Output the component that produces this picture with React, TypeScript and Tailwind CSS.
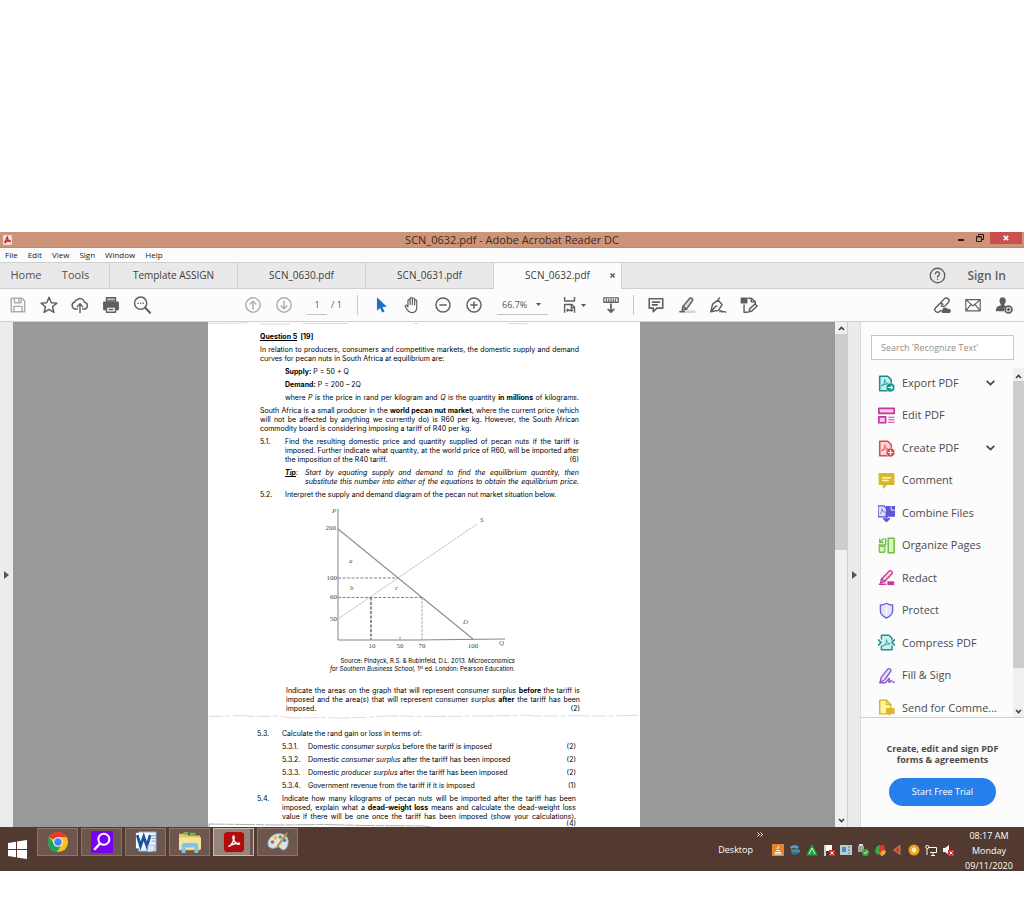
import type { ReactNode } from "react";

type SvgProps = { size?: number; children: ReactNode };

/* Line icon on a 20 unit grid */
function Icon({ size = 18, children }: SvgProps) {
  return (
    <svg
      width={size}
      height={size}
      viewBox="0 0 20 20"
      fill="none"
      stroke="currentColor"
      strokeWidth="1.6"
      strokeLinejoin="round"
      strokeLinecap="round"
      aria-hidden="true"
      className="shrink-0"
    >
      {children}
    </svg>
  );
}

function ToolButton({ label, light, children }: { label: string; light?: boolean; children: ReactNode }) {
  return (
    <button
      type="button"
      aria-label={label}
      className={
        light
          ? "flex w-[31px] shrink-0 items-center justify-center text-[#adadad]"
          : "flex w-[31px] shrink-0 items-center justify-center text-[#5f5f5f]"
      }
    >
      <Icon>{children}</Icon>
    </button>
  );
}

function Divider() {
  return <span className="h-5 w-px shrink-0 bg-[#c8c8c8]" />;
}

function Arrow({ up }: { up?: boolean }) {
  return (
    <svg width="7" height="5" viewBox="0 0 7 5" fill="none" stroke="#404040" strokeWidth="1.6" aria-hidden="true">
      <path d={up ? "M1 4 3.5 1.5 6 4" : "M1 1 3.5 3.5 6 1"} />
    </svg>
  );
}

function TitleBar() {
  return (
    <header className="flex h-4 shrink-0 items-start border-b border-[#b98a76] bg-[#cd9479]">
      <div className="flex h-full w-[90px] items-center pl-[3px]">
        <svg width="9" height="10" viewBox="0 0 9 10" aria-hidden="true">
          <rect width="9" height="10" rx="1" fill="#f3dcd8" />
          <path d="M1.5 8 4.3 2l.6 2.8L8 6.5 4 6z" fill="none" stroke="#c4252b" strokeWidth="1.2" />
        </svg>
      </div>
      <h1 className="flex-1 text-center text-[11px] leading-[15px] text-[#3d2a22]">
        SCN_0632.pdf - Adobe Acrobat Reader DC
      </h1>
      <div className="flex w-[90px] justify-end pr-[2px] text-[#2b1c16]">
        <button type="button" aria-label="Minimize" className="flex h-3 w-[18px] items-end justify-center pb-[3px]">
          <span className="h-[2px] w-[6px] bg-[#2b1c16]" />
        </button>
        <button type="button" aria-label="Restore" className="flex h-3 w-[20px] items-center justify-center">
          <svg width="8" height="8" viewBox="0 0 8 8" fill="none" stroke="#2b1c16" aria-hidden="true">
            <path d="M.5 2.5h5v5h-5zM.5 3h5M2.5 2V.5h5v5H6" />
          </svg>
        </button>
        <button type="button" aria-label="Close" className="flex h-3 w-8 items-center justify-center bg-[#c9504f]">
          <svg width="6" height="6" viewBox="0 0 6 6" stroke="#fff" strokeWidth="1.5" aria-hidden="true">
            <path d="m.7.7 4.6 4.6M5.3.7.7 5.3" />
          </svg>
        </button>
      </div>
    </header>
  );
}

function MenuBar() {
  return (
    <nav className="flex h-[14px] shrink-0 items-center gap-[10px] bg-[#fcfcfc] pl-[5px] text-[8px] text-[#222]">
      {["File", "Edit", "View", "Sign", "Window", "Help"].map((m) => (
        <button key={m} type="button">
          {m}
        </button>
      ))}
    </nav>
  );
}

const files = ["Template ASSIGN", "SCN_0630.pdf", "SCN_0631.pdf"];

function TabBar() {
  return (
    <nav className="flex h-[27px] shrink-0 border-y border-[#cfcfcf] bg-[#e9e9e9] text-[10px] text-[#3c3c3c]">
      <button type="button" className="w-[52px] text-[11px] text-[#505050]">Home</button>
      <button type="button" className="mr-[10px] w-[47px] text-[11px] text-[#505050]">Tools</button>
      {files.map((f) => (
        <button key={f} type="button" className="w-32 border-l border-[#d2d2d2]">
          {f}
        </button>
      ))}
      <div className="-mb-px flex w-[129px] items-center border-x border-[#d2d2d2] bg-[#fcfcfc] pb-[2px]">
        <button type="button" className="flex-1 pl-[18px]">SCN_0632.pdf</button>
        <button type="button" aria-label="Close tab" className="flex w-[18px] justify-center">
          <svg width="5" height="5" viewBox="0 0 5 5" stroke="#555" strokeWidth="1.3" aria-hidden="true">
            <path d="m.5.5 4 4M4.5.5l-4 4" />
          </svg>
        </button>
      </div>
      <div className="ml-auto flex items-center pr-[18px] text-[#5f5f5f]">
        <button type="button" aria-label="Help" className="mr-[21px]">
          <Icon size={17}>
            <circle cx="10" cy="10" r="8.5" />
            <path d="M7.6 8a2.4 2.4 0 1 1 3.6 2.1c-.9.5-1.2.9-1.2 1.8M10 14.2v.2" />
          </Icon>
        </button>
        <button type="button" className="text-[12px] font-semibold">Sign In</button>
      </div>
    </nav>
  );
}

function Toolbar() {
  return (
    <div className="flex h-[33px] shrink-0 items-center border-b border-[#cfcfcf] bg-[#fcfcfc] pl-[2px] text-[9px] text-[#555]">
      <ToolButton label="Save" light>
        <path d="M2.5 2.5h12l3 3v12h-15zM6 2.5v5h7.5v-5M11 4v2M5.5 17.5v-6h9v6" />
      </ToolButton>
      <ToolButton label="Star">
        <path d="m10 1.5 2.5 6 6.3.4-4.9 4.1 1.6 6.3L10 14.9l-5.5 3.4L6.1 12 1.2 7.9l6.3-.4z" />
      </ToolButton>
      <ToolButton label="Upload">
        <path d="M7 14.5H5a4 4 0 0 1-.6-7.9A3 3 0 0 1 7 4.2 4.8 4.8 0 0 1 15 7a3.8 3.8 0 0 1 .2 7.5H13M10 18.5V9M7 11.8 10 8.6l3 3.2" />
      </ToolButton>
      <ToolButton label="Print">
        <path d="M5 2h10v3.5H5z" fill="currentColor" fillOpacity=".35" />
        <path d="M2 7h16v8h-2.5v-3h-11v3H2z" fill="currentColor" />
        <path d="M5 12h10v6H5zM8 15h4" />
      </ToolButton>
      <ToolButton label="Find">
        <circle cx="8.500" cy="8" r="6.800" />
        <path d="M5.600 8h.2M8.500 8h.1M11.300 8h.2" />
        <path d="m13.500 13 5.500 5.500" strokeWidth="2.4" />
      </ToolButton>

      <div className="ml-20 flex items-center">
        <ToolButton label="Previous page" light>
          <circle cx="10" cy="10" r="8" />
          <path d="M10 14.5V6M6.8 9 10 5.8 13.200 9" />
        </ToolButton>
        <ToolButton label="Next page" light>
          <circle cx="10" cy="10" r="8" />
          <path d="M10 5.500V14M6.800 11 10 14.200 13.200 11" />
        </ToolButton>
        <input
          aria-label="Page number"
          defaultValue="1"
          className="ml-2 h-[19px] w-5 border-b border-[#c4c4c4] bg-transparent text-center outline-none"
        />
        <span className="ml-1 w-3 whitespace-nowrap">/ 1</span>
      </div>

      <div className="ml-[14px] flex items-center">
        <Divider />
        <span className="w-[7px]" />
        <ToolButton label="Select">
          <path d="M5.500 1.500v15l3.500-3.200 2.300 5 2.600-1.100-2.300-4.900 4.900-.4z" fill="#1f6fc0" stroke="none" />
        </ToolButton>
        <ToolButton label="Pan">
          <path d="M5.500 12V5a1.200 1.200 0 0 1 2.400 0v4.500V3a1.200 1.200 0 0 1 2.500 0v6.500V3.500a1.200 1.200 0 0 1 2.500 0V10 5.500a1.200 1.200 0 0 1 2.400 0V12c0 4-2 6.500-5.300 6.500-3.500 0-5-1.800-7.500-6.800-.5-1.300 1-2 1.900-1z" strokeWidth="1.300" />
        </ToolButton>
        <ToolButton label="Zoom out">
          <circle cx="10" cy="10" r="7.800" />
          <path d="M6.500 10h7" />
        </ToolButton>
        <ToolButton label="Zoom in">
          <circle cx="10" cy="10" r="7.800" />
          <path d="M6.500 10h7M10 6.500v7" />
        </ToolButton>
        <label className="ml-2 flex h-[19px] w-[51px] items-center border-b border-[#c4c4c4] pl-[5px]">
          <select aria-label="Zoom level" className="w-[29px] appearance-none bg-transparent text-[9px] outline-none">
            <option>66.7%</option>
          </select>
          <svg width="5" height="3" viewBox="0 0 5 3" className="ml-[5px]" aria-hidden="true">
            <path d="M0 0h5L2.500 3z" fill="#555" />
          </svg>
        </label>
        <button type="button" aria-label="Fit page" className="ml-[13px] flex w-[26px] items-center text-[#5f5f5f]">
          <Icon>
            <path d="M4 1v4.500h11V1M4 18.500V9.500h8l3 3v6M11.500 9.500v3.500H15M6.500 15.800h6M8 14.300l-1.500 1.500L8 17.300M11 14.300l1.500 1.500-1.500 1.500" strokeLinecap="butt" />
          </Icon>
          <svg width="5" height="3" viewBox="0 0 5 3" className="ml-[2px]" aria-hidden="true">
            <path d="M0 0h5L2.500 3z" fill="#555" />
          </svg>
        </button>
        <span className="w-2" />
        <ToolButton label="Scroll mode">
          <path d="M2 2h16v5H2zM5 4v2M7.500 4v2M10 4v2M12.500 4v2M15 4v2" strokeWidth="1.400" />
          <path d="M10 9v8.500M6.800 14.800 10 18l3.200-3.200" strokeWidth="1.900" />
        </ToolButton>
        <span className="w-[7px]" />
        <Divider />
        <span className="w-[6px]" />
        <ToolButton label="Comment">
          <path d="M2.500 3h15v10.500H11L7 17.500v-4H2.500zM6 6.800h8M6 9.800h5.500" strokeWidth="1.800" />
        </ToolButton>
        <ToolButton label="Highlight">
          <path d="M8 17.500h10" stroke="#d4d4d4" strokeWidth="3" />
          <path d="M5.500 11.500 13 2.500q2.500-.8 3.500 2L9.500 14.500 4.500 16z" fill="#d9d9d9" />
          <path d="m5.500 11.500 4 3M2 17.500h5" />
        </ToolButton>
        <ToolButton label="Sign">
          <path d="M2 17.500 4 9l6-4.500 4.500 5L10.500 16zM2 17.500l5.500-6.200M10 4.500 11.500 2M8.500 11.200v.1M12 17.500c1.500-3 2 1 3 0s1.500.5 3.500.2" />
        </ToolButton>
        <ToolButton label="Fill and edit">
          <path d="M1.500 2.500h6v5h-6z" fill="currentColor" />
          <path d="M9 2.500h3.500l4.500 4V9M12.500 2.500v4H17M4.500 10v8h4M10 17.500l.8-3.200 5.700-5.500 2.500 2.400-5.800 5.500z" />
        </ToolButton>
      </div>

      <div className="ml-auto flex items-center pr-[5px]">
        <ToolButton label="Copy link">
          <path d="m8.500 7.500 4-4.300a3 3 0 0 1 4.500 4l-3.300 3.500a3 3 0 0 1-4.300 0M11 9.300a3 3 0 0 0-4.300 0L3 13a3 3 0 0 0 4.300 4.200l1.200-1.200" />
          <path d="M10.500 19a2.300 2.300 0 0 1 0-4 3.100 3.100 0 0 1 5.800-.5 2.300 2.300 0 0 1 2 4.500z" fill="currentColor" stroke="none" />
        </ToolButton>
        <ToolButton label="Email">
          <path d="M2 4h16v12.500H2zM2 4l8 7 8-7M2 16.500l5.800-7.200M18 16.500l-5.800-7.200" strokeWidth="1.300" />
        </ToolButton>
        <ToolButton label="Share">
          <path d="M8.500 1.500c2.400 0 3.500 1.700 3.500 3.800 0 1.800-.7 2.900-1.500 3.800v1.400c2 .6 3.500 1 4 2.500H10V17H1c0-4 .5-5.500 5.500-6.500V9.100C5.700 8.200 5 7 5 5.300c0-2.100 1.100-3.800 3.500-3.800z" fill="currentColor" stroke="none" />
          <circle cx="15" cy="15" r="3.800" fill="#fcfcfc" strokeWidth="2" />
          <path d="M13.500 15h3M15 13.500v3" />
        </ToolButton>
      </div>
    </div>
  );
}

/* A paragraph whose lines all reach the right edge except the last */
function Lines({ rows, full }: { rows: ReactNode[]; full?: boolean }) {
  return (
    <>
      {rows.map((r, i) => (
        <span
          key={i}
          className={
            full || i < rows.length - 1
              ? "block [text-align-last:justify]"
              : "flex justify-between"
          }
        >
          {r}
        </span>
      ))}
    </>
  );
}

function Item({ n, children }: { n: string; children: ReactNode }) {
  return (
    <div className="grid grid-cols-[25px_1fr]">
      <span>{n}</span>
      <div>{children}</div>
    </div>
  );
}

function Diagram() {
  return (
    <svg viewBox="0 0 320 158" className="h-[158px] w-full" role="img" aria-label="Supply and demand diagram">
      <g fill="none" stroke="#777">
        <path d="M79 10v131h77l90-1" strokeWidth=".9" />
        <path d="m79 30 135 110" strokeWidth="1.100" stroke="#8c8c8c" />
        <path d="M79 120 218 25" strokeWidth=".8" stroke="#b0b0b0" strokeDasharray="3 .6" />
        <path d="M79 79h60M79 98.500h84" strokeDasharray="3 1.500" strokeWidth=".9" />
        <path d="M112 98.500v42" strokeDasharray="3 1.500" strokeWidth="1.200" stroke="#444" />
        <path d="M163 98v42" strokeDasharray="3 1" strokeWidth=".7" stroke="#888" />
        <path d="M141 138v2.500" strokeWidth=".8" />
      </g>
      <g fill="#444" fontSize="7" fontFamily="Liberation Serif, serif">
        <g textAnchor="end">
          <text x="77" y="31">200</text>
          <text x="78" y="81">100</text>
          <text x="78" y="100">60</text>
          <text x="78" y="122">50</text>
        </g>
        <g textAnchor="middle">
          <text x="113" y="149">10</text>
          <text x="141" y="149">50</text>
          <text x="163" y="149">70</text>
          <text x="214" y="149">100</text>
        </g>
        <g fontStyle="italic" fill="#555">
          <text x="73" y="14">P</text>
          <text x="221" y="23">S</text>
          <text x="90" y="64">a</text>
          <text x="91" y="91">b</text>
          <text x="136" y="91">c</text>
          <text x="204" y="125">D</text>
          <text x="240" y="146">Q</text>
        </g>
      </g>
    </svg>
  );
}

const losses: [string, ReactNode, string][] = [
  ["5.3.1.", <>Domestic <i>consumer surplus</i> before the tariff is imposed</>, "(2)"],
  ["5.3.2.", <>Domestic <i>consumer surplus</i> after the tariff has been imposed</>, "(2)"],
  ["5.3.3.", <>Domestic <i>producer surplus</i> after the tariff has been imposed</>, "(2)"],
  ["5.3.4.", <>Government revenue from the tariff if it is imposed</>, "(1)"],
];

function ScannedPage() {
  return (
    <article className="w-[432px] shrink-0 self-start bg-white font-[Inter,'Liberation_Sans',sans-serif] text-[7px] leading-[9px] text-black">
      <svg viewBox="0 0 432 10" className="h-[10px] w-full" aria-hidden="true" fill="none" stroke="#c9c9c9" strokeWidth=".7">
        <path d="M0 1.500 40 .8M52 2h30M95 1.500h45M205 1.500h5M300 1.500l20 .5" />
      </svg>
      <div className="flex flex-col gap-1 pl-[52px] pr-[61px]">
        <h2 className="font-bold"><u>Question 5</u>&nbsp; [19]</h2>
        <p>
          <Lines
            rows={[
              "In relation to producers, consumers and competitive markets, the domestic supply and demand",
              "curves for pecan nuts in South Africa at equilibrium are:",
            ]}
          />
        </p>
        <p className="pl-[25px]"><b>Supply:</b> P = 50 + Q</p>
        <p className="pl-[25px]"><b>Demand:</b> P = 200 – 2Q</p>
        <p className="pl-[25px]">
          <Lines
            full
            rows={[
              <>where <i>P</i> is the price in rand per kilogram and <i>Q</i> is the quantity <b>in millions</b> of kilograms.</>,
            ]}
          />
        </p>
        <p>
          <Lines
            rows={[
              <>South Africa is a small producer in the <b>world pecan nut market</b>, where the current price (which</>,
              "will not be affected by anything we currently do) is R60 per kg. However, the South African",
              "commodity board is considering imposing a tariff of R40 per kg.",
            ]}
          />
        </p>
        <Item n="5.1.">
          <Lines
            rows={[
              "Find the resulting domestic price and quantity supplied of pecan nuts if the tariff is",
              "imposed. Further indicate what quantity, at the world price of R60, will be imported after",
              <><span>the imposition of the R40 tariff.</span><span>(6)</span></>,
            ]}
          />
        </Item>
        <div className="grid grid-cols-[20px_1fr] pl-[25px] italic">
          <span><b><u>Tip</u></b>:</span>
          <div>
            <Lines
              full
              rows={[
                "Start by equating supply and demand to find the equilibrium quantity, then",
                "substitute this number into either of the equations to obtain the equilibrium price.",
              ]}
            />
          </div>
        </div>
        <Item n="5.2.">Interpret the supply and demand diagram of the pecan nut market situation below.</Item>
      </div>
      <figure className="pl-[51px] pr-[61px]">
        <Diagram />
        <figcaption className="pr-[64px] text-right text-[6px] leading-[8px]">
          Source: Pindyck, R.S. &amp; Rubinfeld, D.L. 2013. <i>Microeconomics</i>
          <br />
          <i>for Southern Business School,</i> 1<sup className="text-[4px] leading-[0]">st</sup> ed. London: Pearson Education.
        </figcaption>
      </figure>
      <p className="mt-[13px] pl-[78px] pr-[60px]">
        <Lines
          rows={[
            <>Indicate the areas on the graph that will represent consumer surplus <b>before</b> the tariff is</>,
            <>imposed and the area(s) that will represent consumer surplus <b>after</b> the tariff has been</>,
            <><span>imposed.</span><span>(2)</span></>,
          ]}
        />
      </p>
      <svg viewBox="0 0 432 16" className="h-4 w-full" aria-hidden="true" fill="none" stroke="#d4d4d4" strokeWidth=".8">
        <path d="M1 3.500 35 2.500l10 1 25-.5 15 2 30-.5 20 .5 30-1 12-1 60 .5 62-.8 20-.5 10 1 40-.5 25 .5 36-1" strokeDasharray="14 2 5 3 22 2" />
      </svg>
      <div className="flex flex-col gap-1 pl-[49px] pr-[64px]">
        <Item n="5.3.">Calculate the rand gain or loss in terms of:</Item>
        {losses.map(([n, text, marks]) => (
          <div key={n} className="flex pl-[25px]">
            <span className="w-[26px]">{n}</span>
            <span className="flex-1">{text}</span>
            <span>{marks}</span>
          </div>
        ))}
        <Item n="5.4.">
          <Lines
            full
            rows={[
              "Indicate how many kilograms of pecan nuts will be imported after the tariff has been",
              <>imposed, explain what a <b>dead-weight loss</b> means and calculate the dead-weight loss</>,
              "value if there will be one once the tariff has been imposed (show your calculations).",
            ]}
          />
        </Item>
      </div>
      <div className="-mt-[2px] flex items-end pr-[64px] leading-[9px]">
        <svg viewBox="0 0 230 6" className="h-[6px] w-[230px]" aria-hidden="true" fill="none" stroke="#999" strokeWidth=".8">
          <path d="M1 6V2l70 1 45-.5 40 1 60 .5 14 2" strokeDasharray="20 1 8 1" />
        </svg>
        <span className="ml-auto">(4)</span>
      </div>
    </article>
  );
}

function RailToggle({ label }: { label: string }) {
  return (
    <button type="button" aria-label={label} className="flex h-full w-full items-center justify-center">
      <svg width="5" height="8" viewBox="0 0 5 8" aria-hidden="true">
        <path d="M0 0v8l5-4z" fill="#555" />
      </svg>
    </button>
  );
}

function DocShape({ stroke, fill }: { stroke: string; fill: string }) {
  return (
    <>
      <path d="M2 1.500h9.500l4 4v13H2z" fill={fill} stroke={stroke} strokeWidth="1.800" />
      <path d="M4.500 12.500c2-1 3.800-4 3.500-7 .2 3 2 5 4.500 5.200-2.500-.3-5.500.3-8 1.800z" stroke={stroke} strokeWidth="1" />
    </>
  );
}

const tools: { name: string; more?: boolean; art: ReactNode }[] = [
  {
    name: "Export PDF",
    more: true,
    art: (
      <>
        <DocShape stroke="#169087" fill="#bdeef0" />
        <circle cx="14.700" cy="14.700" r="5.200" fill="#169087" stroke="#fcfcfc" strokeWidth=".6" />
        <path d="M12 14.700h4.800M15.200 12.900 17 14.700l-1.800 1.800" stroke="#fff" strokeWidth="1.300" />
      </>
    ),
  },
  {
    name: "Edit PDF",
    art: (
      <g stroke="#c8379b">
        <path d="M1 1.500h18v6H1zM1 11.500h8v7H1z" fill="#fbcdec" strokeWidth="2" />
        <path d="M12.500 12H19M12.500 15H19M12.500 18H19" strokeWidth="1.200" />
      </g>
    ),
  },
  {
    name: "Create PDF",
    more: true,
    art: (
      <>
        <DocShape stroke="#dd4850" fill="#fcd5d5" />
        <circle cx="14.700" cy="14.700" r="5.200" fill="#dd4850" stroke="#fcfcfc" strokeWidth=".6" />
        <path d="M12.200 14.700h5M14.700 12.200v5" stroke="#fff" strokeWidth="1.300" />
      </>
    ),
  },
  {
    name: "Comment",
    art: (
      <>
        <path d="M1.500 2h17v12.500H10.500L6.500 18.500v-4h-5z" fill="#d8b92b" stroke="#d8b92b" />
        <path d="M5.500 6.800h9.500M5.500 10h6.500" stroke="#fff6c4" />
      </>
    ),
  },
  {
    name: "Combine Files",
    art: (
      <g stroke="#5b57d6">
        <path d="M10 2h9.500v11H10z" fill="#5b57d6" />
        <path d="M15.500 2v4h4" stroke="#fff" strokeWidth="1" />
        <path d="M0 1h7l3 3v10H0z" fill="#dfe0ff" />
        <path d="M2.500 10.500C5 8 5 6 4.800 4.500 5 7 6 8 8 8.500" strokeWidth="1" />
        <path d="M10 10v9M7 16l3 3.200L13 16" strokeWidth="2.200" />
      </g>
    ),
  },
  {
    name: "Organize Pages",
    art: (
      <g stroke="#77bd45">
        <path d="M12 1.500h7v17h-7z" fill="#d9f4c4" strokeWidth="1.800" />
        <path d="M1.500 11H8v7H1.500z" fill="#d9f4c4" strokeDasharray="2 1.500" />
        <path d="M9 9V2M6.500 2 2 6.500M2 2.500v4h4M1 9.500h8" strokeWidth="1.700" />
      </g>
    ),
  },
  {
    name: "Redact",
    art: (
      <g stroke="#c8379b">
        <path d="m4 12 9-9.500c2-1.500 5 .8 3.500 3L8 14.500l-5 2z" fill="#fbcdec" />
        <path d="m4 12 4 2.500M1.500 18H9" />
        <path d="M11 14.500h8V19h-8z" fill="#c8379b" stroke="none" />
      </g>
    ),
  },
  {
    name: "Protect",
    art: (
      <>
        <path d="M10 1.500c2 1.500 4.500 2 7.200 2V10c0 4.500-3 7-7.200 8.800C5.800 17 2.800 14.500 2.800 10V3.500c2.700 0 5.200-.5 7.200-2z" fill="#e6e5ff" stroke="#6d68cf" strokeWidth="1.700" />
        <path d="M10 3v14" stroke="#fff" strokeWidth="1" />
      </>
    ),
  },
  {
    name: "Compress PDF",
    art: (
      <g stroke="#22918f">
        <path d="M4 1.500h9l3.500 3.500v13.500H4z" fill="#c9f1f1" stroke="none" />
        <path d="M4 6V1.500h9l3.500 3.500v2M4 14v4.500h12.500V14" strokeWidth="1.700" />
        <path d="M6 14c2.500-1 4.300-4.500 4-7.500.3 3 2 5 4.500 5.200C12 11.500 8.500 12.500 6 14z" strokeWidth="1" />
        <path d="M.8 7 3.500 10 .8 13M19.200 7l-2.700 3 2.700 3" strokeWidth="2" />
      </g>
    ),
  },
  {
    name: "Fill & Sign",
    art: (
      <g stroke="#8b5cc9">
        <path d="m3.500 12.500 8-10c2-1.500 4.500.5 3.500 2.500L8 15l-5.500 3z" fill="#eadcff" />
        <path d="M2 18.500h6c3-.5 4-5.500 5.200-5 1.300.6-1.500 4-.2 4.500 1.200.5 1.600-2 2.600-1.800.9.3 0 2 3.900 1.800" />
      </g>
    ),
  },
  {
    name: "Send for Comme...",
    art: (
      <>
        <path d="M2 1.500h8l5 5v11H2z" fill="#fff3a6" stroke="#d8b92b" strokeWidth="1.700" />
        <path d="M10 1.500v5h5" stroke="#d8b92b" />
        <path d="M9.500 10.500h10v7H15L12.500 20v-2.500h-3z" fill="#d8b92b" stroke="none" />
      </>
    ),
  },
];

function ToolsPanel() {
  return (
    <aside className="flex w-[163px] shrink-0 flex-col bg-[#fcfcfc] text-[#4b4b4b]">
      <div className="px-[10px] pt-[11px]">
        <input
          aria-label="Search tools"
          placeholder="Search 'Recognize Text'"
          className="h-[25px] w-full border border-[#c8c8c8] bg-white pl-[9px] text-[9px] outline-none placeholder:text-[#8f8f8f]"
        />
      </div>
      <div className="mt-[8px] flex min-h-0 flex-1">
        <ul className="flex h-[357px] flex-1 flex-col pl-[17px]">
          {tools.map((t) => (
            <li key={t.name} className="flex flex-1">
              <button type="button" className="flex w-full items-center pb-[2px] text-left text-[11px]">
                <Icon size={17}>{t.art}</Icon>
                <span className="ml-[7px] flex-1 whitespace-nowrap">{t.name}</span>
                {t.more && (
                  <svg width="9" height="6" viewBox="0 0 9 6" fill="none" stroke="#444" strokeWidth="1.700" className="mr-[18px]" aria-hidden="true">
                    <path d="m.7.8 3.800 3.800L8.300.8" />
                  </svg>
                )}
              </button>
            </li>
          ))}
        </ul>
        <div className="flex w-[11px] shrink-0 flex-col items-center bg-[#f0f0f0] pt-[6px] pb-[3px]">
          <Arrow up />
          <span className="mt-[2px] h-[287px] w-full bg-[#cdcdcd]" />
          <span className="flex-1" />
          <Arrow />
        </div>
      </div>
      <div className="flex h-[110px] shrink-0 flex-col items-center border-t border-[#cfcfcf] bg-[#fcfcfc] pt-[25px] text-center">
        <p className="text-[9px] leading-[11px] font-bold">
          Create, edit and sign PDF
          <br />
          forms &amp; agreements
        </p>
        <button type="button" className="mt-[13px] h-7 w-[107px] rounded-full bg-[#2680eb] text-[9px] text-white">
          Start Free Trial
        </button>
      </div>
    </aside>
  );
}

const apps: { name: string; active?: boolean; art: ReactNode }[] = [
  {
    name: "Chrome",
    art: (
      <>
        <circle cx="12" cy="12" r="11" fill="#fbc116" />
        <path d="M12 12 2.500 6.500A11 11 0 0 1 21.500 6.500H12z" fill="#e33b2e" />
        <path d="M2.500 6.500A11 11 0 0 0 11 23l5-8.500L12 12 7.500 14z" fill="#1da45b" />
        <circle cx="12" cy="12" r="5.300" fill="#fff" />
        <circle cx="12" cy="12" r="4.100" fill="#4285f4" />
      </>
    ),
  },
  {
    name: "Search",
    art: (
      <>
        <path d="M0 0h24v24H0z" fill="#7a00f0" />
        <circle cx="14" cy="9" r="6" fill="none" stroke="#fff" strokeWidth="2.200" />
        <path d="M10 13.500 3.500 20.500" stroke="#fff" strokeWidth="2.600" />
      </>
    ),
  },
  {
    name: "Word",
    art: (
      <>
        <path d="M4 1h19v21H4z" fill="#e9f0fa" stroke="#7f9dcc" />
        <path d="M18 5h4M18 8h4M18 11h4" stroke="#7f9dcc" />
        <path d="M1 2h16v17H1z" fill="#f4f8fd" />
        <path d="m2.500 4.500 3.500 12L9.500 6l3.500 10.500 3.500-12" fill="none" stroke="#1d4f9f" strokeWidth="3" />
        <path d="m14 15 8 1-2 6-6 1z" fill="#dce8f7" stroke="#7f9dcc" strokeWidth=".6" />
      </>
    ),
  },
  {
    name: "File Explorer",
    art: (
      <>
        <path d="M0 3h8l2 2h13v16H0z" fill="#e4c766" />
        <path d="M5 1h5v3H5zM12 2h6v3h-6z" fill="#71b35e" />
        <path d="M-1 7h26v13H-1z" fill="#f5e29b" />
        <path d="M3 24v-8q0-3 2-3h14q2 0 2 3v8h-4v-6H7v6z" fill="#7fc4e8" />
      </>
    ),
  },
  {
    name: "Acrobat",
    active: true,
    art: (
      <>
        <rect x="1" y="1" width="22" height="22" rx="4" fill="#b30b0b" />
        <path d="M6 17c3-1 7-8 6-11-.8-2-2.200.8 0 4.500 2 3.300 5 4.800 6 3.500 1-1.700-8-.3-12 3z" fill="none" stroke="#fff" strokeWidth="1.500" />
      </>
    ),
  },
  {
    name: "Paint",
    art: (
      <>
        <path d="M1 14C1 7 8 2 15 3c6 1 9 5 8 11-1 5-4 8-7 6-2-1.500-3-4-6-2s-9 1-9-4z" fill="#d9e3e8" stroke="#8aa6b5" />
        <circle cx="6" cy="12" r="2" fill="#d9534f" />
        <circle cx="9" cy="7.500" r="2" fill="#f0b53c" />
        <circle cx="14.500" cy="6.500" r="2" fill="#58a55c" />
        <circle cx="19" cy="10" r="2" fill="#3c7fd0" />
        <path d="m10 17 10-14 3-2-1.500 4L12 18z" fill="#c98a3c" />
      </>
    ),
  },
];

const tray: { name: string; art: ReactNode }[] = [
  { name: "Java", art: <><path d="M0 0h12v12H0z" fill="#e98530" /><path d="M3 8.500h6M4 6.500h4M5 5l2-3M2.500 10h7" stroke="#fff" /></> },
  { name: "Sync", art: <><path d="M1 3q5-4 9 0l-2 2Q5 3 2 5z" fill="#4aa3d8" /><path d="M2 5h8l1 3q-5 5-9 1z" fill="#2f6fb5" /><path d="M3 7h8" stroke="#5bbf5b" /></> },
  { name: "Antivirus", art: <><path d="M6 0 12 11.500H0z" fill="#1fa33c" /><path d="m6 4-3 6M6 4l3 6" stroke="#d8f5dc" /></> },
  { name: "Action center", art: <><path d="M2 1v11" stroke="#fff" strokeWidth="1.500" /><path d="M3 1h6v6H3z" fill="#fff" /><path d="M6 6h6v6H6z" fill="#d12f2f" /><path d="m7.500 7.500 3 3m0-3-3 3" stroke="#fff" /></> },
  { name: "Display", art: <><path d="M0 1h12v10H0z" fill="#b9cbd6" /><path d="M2 3h4v5H2z" fill="#3f93c9" /><path d="M8 3h2M8 6h2M8 9h2" stroke="#60727d" /></> },
  { name: "Safely remove", art: <><path d="M1 2h6v6H1z" fill="#9da5a5" /><path d="M2 0h4v2H2z" fill="#d8d8d8" /><circle cx="8.500" cy="8.500" r="3.500" fill="#37a53f" /><path d="m7 8.500 1.200 1.200L10.500 7" stroke="#fff" fill="none" /></> },
  { name: "Cleaner", art: <><path d="M1 7Q2 1 6 1v9Q2 12 1 7z" fill="#3ba449" /><path d="M5 5q1-5 5-4l1 5-5 3z" fill="#dc3b2a" /><path d="M6 9q3-4 6-2-1 5-5 5z" fill="#e8b02f" /></> },
  { name: "Back", art: <path d="M9 1.500v9L2.500 6z" fill="#c0442f" stroke="#e2a08f" strokeWidth=".7" /> },
  { name: "Update", art: <><circle cx="6" cy="6" r="5.500" fill="#f0a020" /><circle cx="6" cy="6" r="2.500" fill="#ffe28a" /><path d="M6 3.500v5" stroke="#fff" /></> },
  { name: "Network", art: <g fill="none" stroke="#fff"><path d="M4 3.500h7.500v5H5M8 8.500v3M6 11.500h4M2 5v6" /><circle cx="2.300" cy="3" r="1.600" /></g> },
  { name: "Volume", art: <><path d="M1 4h2l4-3v10L3 8H1z" fill="#f3f3f3" /><path d="M6 6h6v6H6z" fill="#d12f2f" /><path d="m7.500 7.500 3 3m0-3-3 3" stroke="#fff" /></> },
];

function Taskbar() {
  return (
    <footer className="flex h-11 shrink-0 bg-[#523a30] text-[9px] text-white">
      <button type="button" aria-label="Start" className="mr-[2px] flex w-[35px] items-center justify-center">
        <svg width="19" height="19" viewBox="0 0 19 19" fill="#fff" aria-hidden="true">
          <path d="M0 3 8 1.800V9H0zM9 1.600 19 0v9H9zM0 10h8v7.200L0 16zM9 10h10v9L9 17.400z" />
        </svg>
      </button>
      <div className="flex h-[29px] gap-[3px] pt-px">
        {apps.map((a) => (
          <button
            key={a.name}
            type="button"
            aria-label={a.name}
            className={
              a.active
                ? "flex w-[41px] items-center justify-center border border-[#c9bcb6] bg-[#96857d] shadow-[inset_-3px_0_0_#6b564d]"
                : "flex w-[41px] items-center justify-center border border-[#8b766d] bg-[#6d564d]"
            }
          >
            <svg width="22" height="22" viewBox="0 0 24 24" aria-hidden="true">
              {a.art}
            </svg>
          </button>
        ))}
      </div>
      <div className="ml-auto flex pt-px">
        <span className="self-center">Desktop</span>
        <button type="button" aria-label="More toolbars" className="ml-1 flex w-[10px] items-start pt-[4px]">
          <svg width="6" height="5" viewBox="0 0 6 5" fill="none" stroke="#fff" aria-hidden="true">
            <path d="m.5.5 2 2-2 2M3.500.5l2 2-2 2" />
          </svg>
        </button>
        <div className="ml-[5px] flex items-center gap-[5px]">
          {tray.map((t) => (
            <button key={t.name} type="button" aria-label={t.name}>
              <svg width="12" height="12" viewBox="0 0 12 12" aria-hidden="true">
                {t.art}
              </svg>
            </button>
          ))}
        </div>
        <p className="w-[70px] text-center leading-[15px]">
          08:17 AM
          <br />
          Monday
          <br />
          09/11/2020
        </p>
      </div>
    </footer>
  );
}

export default function App() {
  return (
    <div className="flex h-screen flex-col bg-white pt-[232px] pb-[39px] font-['Open_Sans','Noto_Sans',sans-serif]">
      <TitleBar />
      <MenuBar />
      <TabBar />
      <Toolbar />
      <main className="flex min-h-0 flex-1 overflow-hidden">
        <div className="w-[13px] shrink-0 bg-[#ececec]">
          <RailToggle label="Show navigation pane" />
        </div>
        <section className="flex min-w-0 flex-1 justify-center overflow-hidden bg-[#999]">
          <ScannedPage />
        </section>
        <div className="flex w-[13px] shrink-0 flex-col items-center border-r border-[#d0d0d0] bg-[#f0f0f0] pt-1 pb-1">
          <Arrow up />
          <span className="mt-[3px] h-[216px] w-full bg-[#cdcdcd]" />
          <span className="flex-1" />
          <Arrow />
        </div>
        <div className="w-[13px] shrink-0 border-r border-[#dadada] bg-[#ebebeb]">
          <RailToggle label="Hide tools pane" />
        </div>
        <ToolsPanel />
      </main>
      <Taskbar />
    </div>
  );
}
